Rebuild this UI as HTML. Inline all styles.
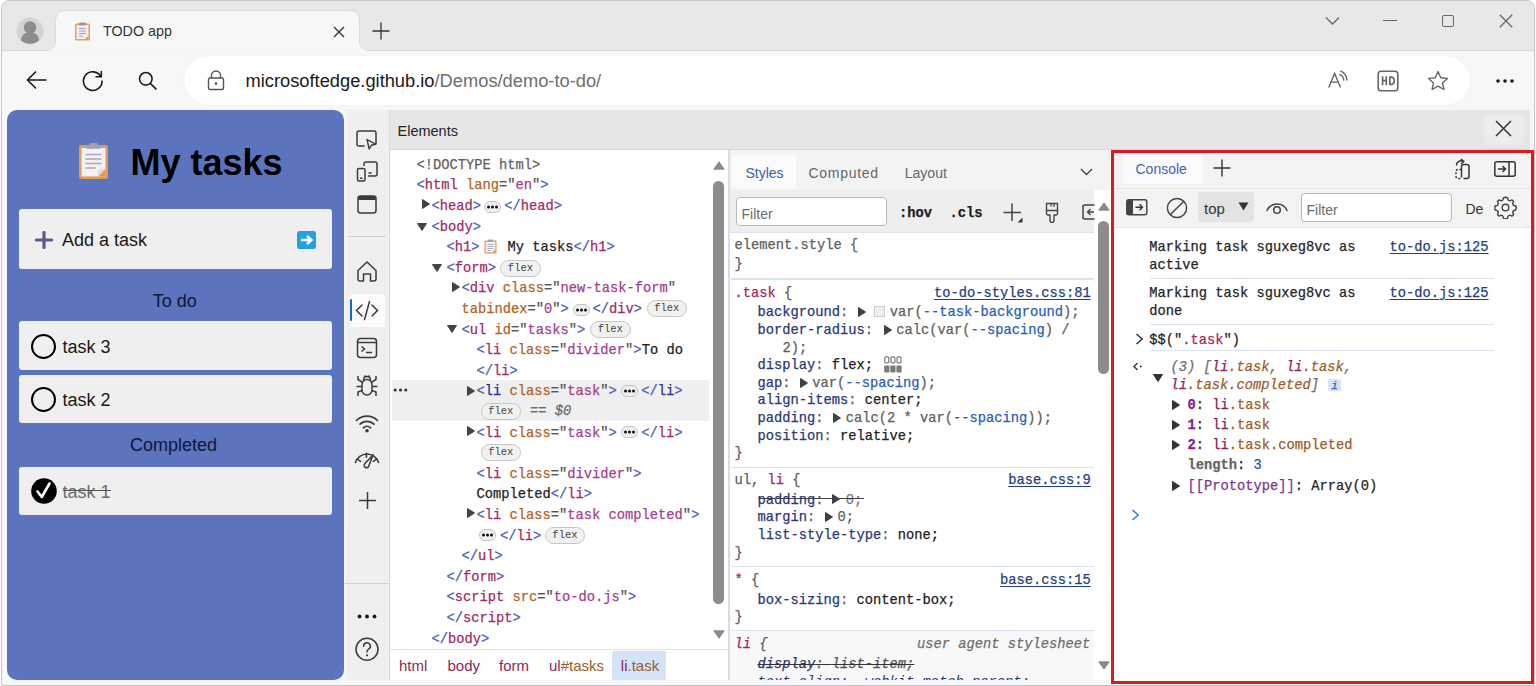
<!DOCTYPE html>
<html><head><meta charset="utf-8">
<style>
*{box-sizing:border-box;margin:0;padding:0}
html,body{width:1536px;height:686px;overflow:hidden;background:#fff;font-family:"Liberation Sans",sans-serif}
.a{position:absolute}
#win{position:absolute;left:1px;top:0;width:1534px;height:686px;background:#f7f7f7;border:1px solid #c4c4c4;border-radius:8px 8px 0 0;overflow:hidden}
#wi{position:absolute;left:-2px;top:-1px;width:1536px;height:686px}
.t{position:absolute;white-space:pre}.m{-webkit-text-stroke:0.25px currentColor}
.b{color:#4a5db6}.n{color:#a32b62}.at{color:#b1631f}.v{color:#a5408c}.q{color:#555}.x{color:#222}.dt{color:#5f5f5f}.nsel{color:#2b2f88}
.pill{border:1px solid #c6c6c6;background:#f1f1f1;border-radius:8.5px;font-family:"Liberation Mono",monospace;font-size:10.5px;line-height:15px;color:#444;text-align:center}
.dots{width:16px;height:10.5px;border:1px solid #b9b9b9;background:#ececec;border-radius:5px;line-height:0}
.dots svg{position:absolute;left:-1px;top:-1px}
</style></head><body>
<div id="win"><div id="wi">
<!-- browser chrome -->
<div class="a" style="left:0;top:0;width:1536px;height:51px;background:#e8e8e8"></div>
<div class="a" style="left:0;top:50px;width:1536px;height:1px;background:#d9d9d9"></div>
<!-- profile -->
<svg class="a" style="left:16px;top:17px" width="28" height="28" viewBox="0 0 28 28"><circle cx="14" cy="14" r="13.5" fill="#d4d4d4"/><circle cx="14" cy="10.5" r="6.2" fill="#8c8c8c"/><path d="M5 23.5 C5 17.5 9 15.8 14 15.8 C19 15.8 23 17.5 23 23.5 C20.5 25.5 17.5 26.8 14 26.8 C10.5 26.8 7.5 25.5 5 23.5Z" fill="#8c8c8c"/></svg>
<!-- active tab -->
<div class="a" style="left:56px;top:11px;width:303px;height:41px;background:#f7f7f7;border-radius:8px 8px 0 0;box-shadow:0 0 1.5px rgba(0,0,0,.25)"></div>
<div class="a" style="left:48px;top:43px;width:8px;height:8px;background:radial-gradient(circle at 0 0,#e8e8e8 7.5px,#f7f7f7 8px)"></div>
<div class="a" style="left:359px;top:43px;width:8px;height:8px;background:radial-gradient(circle at 100% 0,#e8e8e8 7.5px,#f7f7f7 8px)"></div>
<div class="a" style="left:40px;top:51px;width:340px;height:2px;background:#f7f7f7"></div>
<!-- tab favicon clipboard -->
<svg class="a" style="left:74px;top:22px" width="17" height="19" viewBox="0 0 17 19"><rect x="1" y="1.5" width="15" height="17" rx="1.5" fill="#e8a04a"/><rect x="2.5" y="3" width="12" height="14" fill="#f2eff6"/><rect x="5" y="0.5" width="7" height="3" rx="1" fill="#9a9a9a"/><path d="M5 6.5h7M5 9h7M5 11.5h7M5 14h4" stroke="#9aa0b0" stroke-width="1"/><path d="M11 17 L14.5 13.5 V17Z" fill="#e8a04a"/></svg>
<div class="a" style="left:103px;top:23.3px;font-size:14.3px;color:#333">TODO app</div>
<svg class="a" style="left:333px;top:26px" width="12" height="12" viewBox="0 0 12 12"><path d="M1 1L11 11M11 1L1 11" stroke="#333" stroke-width="1.4"/></svg>
<svg class="a" style="left:372px;top:22px" width="18" height="18" viewBox="0 0 18 18"><path d="M9 0.5V17.5M0.5 9H17.5" stroke="#333" stroke-width="1.3"/></svg>
<!-- window controls -->
<svg class="a" style="left:1325px;top:16px" width="15" height="10" viewBox="0 0 15 10"><path d="M1 1.5L7.5 8L14 1.5" fill="none" stroke="#666" stroke-width="1.3"/></svg>
<div class="a" style="left:1383px;top:20px;width:14px;height:1.3px;background:#666"></div>
<div class="a" style="left:1442px;top:15px;width:12px;height:12px;border:1.3px solid #666;border-radius:2px"></div>
<svg class="a" style="left:1499px;top:14px" width="14" height="14" viewBox="0 0 14 14"><path d="M0.8 0.8L13.2 13.2M13.2 0.8L0.8 13.2" stroke="#666" stroke-width="1.3"/></svg>
<!-- toolbar icons -->
<svg class="a" style="left:26px;top:70px" width="22" height="20" viewBox="0 0 22 20"><path d="M20.5 10H2M10 1.5L1.5 10L10 18.5" fill="none" stroke="#1a1a1a" stroke-width="1.6"/></svg>
<svg class="a" style="left:81px;top:69px" width="24" height="23" viewBox="0 0 24 23"><path d="M19.8 7.5A9.3 9.3 0 1 0 21 11.5" fill="none" stroke="#1a1a1a" stroke-width="1.6"/><path d="M14.5 7.8H20.3V2" fill="none" stroke="#1a1a1a" stroke-width="1.6"/></svg>
<svg class="a" style="left:138px;top:71px" width="20" height="20" viewBox="0 0 20 20"><circle cx="7.8" cy="7.8" r="6.3" fill="none" stroke="#1a1a1a" stroke-width="1.6"/><path d="M12.3 12.3L18.5 18.5" stroke="#1a1a1a" stroke-width="1.7"/></svg>
<!-- address bar -->
<div class="a" style="left:184px;top:56px;width:1286px;height:49px;background:#fff;border-radius:25px;box-shadow:0 0 1px rgba(0,0,0,.12)"></div>
<svg class="a" style="left:207px;top:70px" width="18" height="21" viewBox="0 0 18 21"><rect x="1.5" y="8" width="15" height="11.5" rx="1.8" fill="none" stroke="#555" stroke-width="1.4"/><path d="M4.5 8V5.5A4.5 4.5 0 0 1 13.5 5.5V8" fill="none" stroke="#555" stroke-width="1.4"/><circle cx="9" cy="13.5" r="1.2" fill="#444"/></svg>
<div class="a" style="left:245.5px;top:70px;font-size:18.3px;color:#1a1a1a;white-space:pre">microsoftedge.github.io<span style="color:#6e6e6e">/Demos/demo-to-do/</span></div>
<!-- right icons -->
<svg class="a" style="left:1326px;top:69px" width="24" height="21" viewBox="0 0 24 21"><path d="M2.7 18.5L8.6 4.4L14.6 18.5M5.1 13.1H12.3" fill="none" stroke="#666" stroke-width="1.4"/><path d="M13.3 5.1A7.5 7.5 0 0 1 17.8 11.6M14.3 1.9A10.5 10.5 0 0 1 21 11.6" fill="none" stroke="#666" stroke-width="1.4"/></svg>
<svg class="a" style="left:1377px;top:70px" width="22" height="22" viewBox="0 0 22 22"><rect x="1.2" y="1.2" width="19.6" height="19.6" rx="2.8" fill="none" stroke="#666" stroke-width="1.6"/><path d="M5.6 6.3V15.2M9.3 6.3V15.2M5.6 10.7H9.3M12.9 7.1V14.4H14.2A3.1 3.65 0 0 0 14.2 7.1Z" fill="none" stroke="#666" stroke-width="1.7"/></svg>
<svg class="a" style="left:1427px;top:70px" width="22" height="22" viewBox="0 0 22 22"><path d="M11 1.6L13.8 7.7L20.4 8.4L15.5 12.9L16.9 19.5L11 16.2L5.1 19.5L6.5 12.9L1.6 8.4L8.2 7.7Z" fill="none" stroke="#666" stroke-width="1.4" stroke-linejoin="round"/></svg>
<svg class="a" style="left:1495px;top:77px" width="20" height="8" viewBox="0 0 20 8"><circle cx="3" cy="4" r="1.8" fill="#1a1a1a"/><circle cx="10" cy="4" r="1.8" fill="#1a1a1a"/><circle cx="17" cy="4" r="1.8" fill="#1a1a1a"/></svg>
<!-- web page -->
<div class="a" style="left:7px;top:109.5px;width:336.7px;height:570px;background:#5c74be;border-radius:10px"></div>
<svg class="a" style="left:78px;top:142px" width="31" height="38" viewBox="0 0 31 38"><rect x="1" y="3" width="29" height="34" rx="2.5" fill="#e49a48"/><rect x="3.5" y="6" width="24" height="28.5" fill="#f3f0f7"/><path d="M8 3.5h15v1.8a1.5 1.5 0 0 1-1.5 1.5h-12a1.5 1.5 0 0 1-1.5-1.5z" fill="#a3a3a3"/><rect x="11.5" y="1" width="8" height="3.5" rx="1" fill="#a3a3a3"/><path d="M7.5 12.5h16M7.5 17h16M7.5 21.5h16M7.5 26h10" stroke="#a6a8b8" stroke-width="1.3"/><path d="M20 34.5L27.5 27V34.5Z" fill="#e49a48"/><path d="M20 34.5L20 27.5L27.5 27Z" fill="#dcd6e6"/></svg>
<div class="a" style="left:130.5px;top:142.2px;font-size:36px;font-weight:bold;color:#000">My tasks</div>
<div class="a" style="left:19px;top:209px;width:313px;height:60px;background:#efefef;border-radius:3px"></div>
<svg class="a" style="left:35px;top:231px" width="18" height="18" viewBox="0 0 18 18"><path d="M9 1.5V16.5M1.5 9H16.5" stroke="#5a5a8c" stroke-width="3.2" stroke-linecap="round"/></svg>
<div class="a" style="left:62px;top:229.7px;font-size:18px;color:#1a1a1a">Add a task</div>
<svg class="a" style="left:297px;top:231px" width="19" height="18" viewBox="0 0 19 18"><rect x="0" y="0" width="19" height="18" rx="2.5" fill="#22a0e2"/><path d="M4 9H13.5M10 5L14.5 9L10 13" fill="none" stroke="#fff" stroke-width="2.4" stroke-linejoin="miter"/></svg>
<div class="a" style="left:152.7px;top:291px;font-size:18px;color:#0b1836">To do</div>
<div class="a" style="left:19px;top:321px;width:313px;height:49px;background:#efefef;border-radius:3px"></div>
<div class="a" style="left:19px;top:374.5px;width:313px;height:48.5px;background:#efefef;border-radius:3px"></div>
<div class="a" style="left:31px;top:333.5px;width:25px;height:25px;border:2.9px solid #000;border-radius:50%"></div>
<div class="a" style="left:31px;top:386.5px;width:25px;height:25px;border:2.9px solid #000;border-radius:50%"></div>
<div class="a" style="left:62.5px;top:337px;font-size:18px;color:#1a1a1a">task 3</div>
<div class="a" style="left:62.5px;top:390px;font-size:18px;color:#1a1a1a">task 2</div>
<div class="a" style="left:130px;top:435.3px;font-size:18px;color:#0b1836">Completed</div>
<div class="a" style="left:19px;top:466.5px;width:313px;height:48px;background:#efefef;border-radius:3px"></div>
<svg class="a" style="left:30.5px;top:477.5px" width="26" height="26" viewBox="0 0 26 26"><circle cx="13" cy="13" r="12.8" fill="#000"/><path d="M6.5 13.5L10.8 19L18.5 5.5" fill="none" stroke="#fff" stroke-width="2.6" stroke-linecap="round" stroke-linejoin="round"/></svg>
<div class="a" style="left:62.5px;top:482px;font-size:18px;color:#6c6c6c">task 1</div>
<div class="a" style="left:62.5px;top:489.6px;width:48px;height:1.4px;background:#555"></div>
<div class="a" style="left:345.5px;top:110px;width:44.5px;height:570px;background:#efefef;"></div>
<div class="a" style="left:389px;top:110px;width:1.5px;height:570px;background:#d5d9e6;"></div>
<svg class="a" style="left:356px;top:130px" width="22" height="20" viewBox="0 0 22 20"><path d="M8 16H3a2 2 0 0 1-2-2V3a2 2 0 0 1 2-2h15a2 2 0 0 1 2 2v11" fill="none" stroke="#3b3b3b" stroke-width="1.5" stroke-linecap="round"/><path d="M11 9.5L19.5 14.2L15.3 15.3L13.2 19Z" fill="none" stroke="#3b3b3b" stroke-width="1.4" stroke-linejoin="round"/></svg>
<svg class="a" style="left:356px;top:161px" width="22" height="22" viewBox="0 0 22 22"><path d="M8 5V3a2 2 0 0 1 2-2h9a2 2 0 0 1 2 2v10a2 2 0 0 1-2 2h-7" fill="none" stroke="#3b3b3b" stroke-width="1.5"/><rect x="1.5" y="7.5" width="7.5" height="12.5" rx="1.5" fill="none" stroke="#3b3b3b" stroke-width="1.5"/><path d="M4 17.3h2.5M12.5 12h3" stroke="#3b3b3b" stroke-width="1.5"/></svg>
<svg class="a" style="left:357px;top:195px" width="20" height="19" viewBox="0 0 20 19"><rect x="1" y="1" width="18" height="17" rx="2.5" fill="none" stroke="#3b3b3b" stroke-width="1.5"/><path d="M1.5 2.5a1.5 1.5 0 0 1 1.5-1.5h14a1.5 1.5 0 0 1 1.5 1.5V5H1.5Z" fill="#3b3b3b"/></svg>
<div class="a" style="left:348px;top:236px;width:38px;height:1.2px;background:#d0d0d0;"></div>
<svg class="a" style="left:356px;top:260px" width="22" height="23" viewBox="0 0 22 23"><path d="M2 10.5L11 2L20 10.5V19a2 2 0 0 1-2 2h-3.5v-7h-7v7H4a2 2 0 0 1-2-2Z" fill="none" stroke="#3b3b3b" stroke-width="1.5" stroke-linejoin="round"/></svg>
<div class="a" style="left:350px;top:294px;width:35px;height:33px;background:#fbfbfb;border-radius:3px"></div>
<div class="a" style="left:350px;top:299px;width:2.3px;height:22px;background:#0f6cbd;border-radius:1px"></div>
<svg class="a" style="left:355px;top:300px" width="24" height="21" viewBox="0 0 24 21"><path d="M7 5L1.5 10.5L7 16M17 5L22.5 10.5L17 16M14.5 1.5L9.5 19.5" fill="none" stroke="#3b3b3b" stroke-width="1.5" stroke-linecap="round"/></svg>
<svg class="a" style="left:356px;top:337px" width="22" height="22" viewBox="0 0 22 22"><rect x="1.5" y="1.5" width="19" height="19" rx="3" fill="none" stroke="#3b3b3b" stroke-width="1.5"/><path d="M1.5 5.5H20.5" stroke="#3b3b3b" stroke-width="1.5"/><path d="M5.5 9.5L8.5 12L5.5 14.5M10 15.5H16" fill="none" stroke="#3b3b3b" stroke-width="1.5"/></svg>
<svg class="a" style="left:355px;top:374px" width="24" height="23" viewBox="0 0 24 23"><rect x="7" y="5.5" width="10" height="15.5" rx="5" fill="none" stroke="#3b3b3b" stroke-width="1.5"/><path d="M8.5 6C8.5 3.5 10 2.5 12 2.5S15.5 3.5 15.5 6M3 2v3.5L7 8M21 2v3.5L17 8M1.5 12.5H7M17 12.5H22.5M3 22v-4L7 16.5M21 22v-4L17 16.5M9.5 1.5l1 1.5M14.5 1.5l-1 1.5" fill="none" stroke="#3b3b3b" stroke-width="1.5"/></svg>
<svg class="a" style="left:355px;top:414px" width="24" height="19" viewBox="0 0 24 19"><path d="M1.5 6.5A15 15 0 0 1 22.5 6.5M5 10.2A10 10 0 0 1 19 10.2M8.5 13.8A5 5 0 0 1 15.5 13.8" fill="none" stroke="#3b3b3b" stroke-width="1.7" stroke-linecap="round"/><circle cx="12" cy="16.8" r="1.8" fill="#3b3b3b"/></svg>
<svg class="a" style="left:350px;top:445px" width="35" height="30" viewBox="0 0 35 30"><path d="M5.5 17.5A12 12 0 0 1 28.5 17.5" fill="none" stroke="#3b3b3b" stroke-width="1.6" stroke-linecap="round"/><path d="M7.2 14.2L10.6 16.4M16.4 8.3V12.3M26.8 14.2L23.4 16.4" stroke="#3b3b3b" stroke-width="1.6" stroke-linecap="round"/><path d="M23.2 9.8L18.9 20.6A2.4 2.4 0 1 1 14.9 18.6Z" fill="none" stroke="#3b3b3b" stroke-width="1.5" stroke-linejoin="round"/></svg>
<svg class="a" style="left:358px;top:491px" width="19" height="19" viewBox="0 0 19 19"><path d="M9.5 1V18M1 9.5H18" stroke="#3b3b3b" stroke-width="1.5"/></svg>
<div class="a" style="left:345px;top:583px;width:43px;height:1.2px;background:#d0d0d0;"></div>
<svg class="a" style="left:357px;top:612px" width="20" height="8" viewBox="0 0 20 8"><circle cx="2.5" cy="4.5" r="1.9" fill="#1a1a1a"/><circle cx="10" cy="4.5" r="1.9" fill="#1a1a1a"/><circle cx="17.5" cy="4.5" r="1.9" fill="#1a1a1a"/></svg>
<svg class="a" style="left:355px;top:637px" width="24" height="25" viewBox="0 0 24 25"><circle cx="12" cy="12.2" r="11" fill="none" stroke="#3b3b3b" stroke-width="1.5"/><path d="M8.6 9.2a3.4 3.4 0 1 1 5 3c-1.2.7-1.6 1.4-1.6 2.8" fill="none" stroke="#3b3b3b" stroke-width="1.5" stroke-linecap="round"/><circle cx="12" cy="18.3" r="1.1" fill="#3b3b3b"/></svg>
<div class="a" style="left:390px;top:110px;width:1140px;height:40px;background:#e6e6e6;"></div>
<div class="a" style="left:390px;top:149px;width:1140px;height:1px;background:#d6d6d6;"></div>
<div class="t" style="left:397.5px;top:121.55px;font-size:14.5px;line-height:18.85px;font-family:'Liberation Sans',sans-serif;color:#242424;">Elements</div>
<div class="a" style="left:1484px;top:114.5px;width:40px;height:30.5px;background:#ececec;border-radius:2px"></div>
<svg class="a" style="left:1495px;top:120px" width="17" height="17" viewBox="0 0 17 17"><path d="M1 1L16 16M16 1L1 16" stroke="#333" stroke-width="1.5"/></svg>
<div class="a" style="left:390px;top:150px;width:339px;height:530px;background:#fff;"></div>
<div class="a" style="left:392px;top:380.3px;width:317px;height:40.5px;background:#efefef;"></div>
<svg class="a" style="left:393px;top:386px" width="16" height="8" viewBox="0 0 16 8"><circle cx="2.2" cy="4" r="1.6" fill="#333"/><circle cx="7.5" cy="4" r="1.6" fill="#333"/><circle cx="12.8" cy="4" r="1.6" fill="#333"/></svg>
<div class="t m" style="left:416.5px;top:156.80px;font-size:13.75px;line-height:17.88px;font-family:'Liberation Mono',monospace;color:#222;"><span class="dt">&lt;!DOCTYPE html&gt;</span></div>
<div class="t m" style="left:416.5px;top:177.40px;font-size:13.75px;line-height:17.88px;font-family:'Liberation Mono',monospace;color:#222;"><span class="b">&lt;</span><span class="n">html</span> <span class="at">lang</span><span class="q">=&quot;</span><span class="v">en</span><span class="q">&quot;</span><span class="b">&gt;</span></div>
<svg class="a" style="left:422px;top:199.2px" width="8" height="10" viewBox="0 0 8 10"><path d="M0.5 0.5L7.5 5L0.5 9.5Z" fill="#444" stroke="#444" stroke-width="1" stroke-linejoin="round"/></svg>
<div class="t m" style="left:431.5px;top:198.00px;font-size:13.75px;line-height:17.88px;font-family:'Liberation Mono',monospace;color:#222;"><span class="b">&lt;</span><span class="n">head</span><span class="b">&gt;</span></div>
<svg class="a" style="left:484.3px;top:200.8px" width="17" height="12" viewBox="0 0 17 12"><rect x="0.5" y="0.5" width="16" height="11" rx="5.5" fill="#efefef" stroke="#c4c4c4"/><circle cx="4.5" cy="6" r="1.5" fill="#111"/><circle cx="8.5" cy="6" r="1.5" fill="#111"/><circle cx="12.5" cy="6" r="1.5" fill="#111"/></svg>
<div class="t m" style="left:504.2px;top:198.00px;font-size:13.75px;line-height:17.88px;font-family:'Liberation Mono',monospace;color:#222;"><span class="b">&lt;/</span><span class="n">head</span><span class="b">&gt;</span></div>
<svg class="a" style="left:417px;top:223px" width="10" height="8" viewBox="0 0 10 8"><path d="M0.5 0.5L9.5 0.5L5 7.5Z" fill="#444" stroke="#444" stroke-width="1" stroke-linejoin="round"/></svg>
<div class="t m" style="left:431.5px;top:218.60px;font-size:13.75px;line-height:17.88px;font-family:'Liberation Mono',monospace;color:#222;"><span class="b">&lt;</span><span class="n">body</span><span class="b">&gt;</span></div>
<div class="t m" style="left:446.5px;top:239.20px;font-size:13.75px;line-height:17.88px;font-family:'Liberation Mono',monospace;color:#222;"><span class="b">&lt;</span><span class="n">h1</span><span class="b">&gt;</span></div>
<svg class="a" style="left:483.5px;top:239px" width="13" height="15" viewBox="0 0 13 15"><rect x="0.5" y="1.5" width="12" height="13" rx="1" fill="#e49a48"/><rect x="1.7" y="2.7" width="9.6" height="10.6" fill="#f3f0f7"/><rect x="4" y="0.5" width="5" height="2.3" rx="0.6" fill="#a3a3a3"/><path d="M3.3 5.5h6.4M3.3 7.5h6.4M3.3 9.5h6.4M3.3 11.5h4" stroke="#a6a8b8" stroke-width="0.8"/><path d="M8.5 13.3L11.3 10.5V13.3Z" fill="#e49a48"/></svg>
<div class="t m" style="left:507.5px;top:239.20px;font-size:13.75px;line-height:17.88px;font-family:'Liberation Mono',monospace;color:#222;"><span class="x">My tasks</span><span class="b">&lt;/</span><span class="n">h1</span><span class="b">&gt;</span></div>
<svg class="a" style="left:431.5px;top:264px" width="10" height="8" viewBox="0 0 10 8"><path d="M0.5 0.5L9.5 0.5L5 7.5Z" fill="#444" stroke="#444" stroke-width="1" stroke-linejoin="round"/></svg>
<div class="t m" style="left:446.5px;top:259.80px;font-size:13.75px;line-height:17.88px;font-family:'Liberation Mono',monospace;color:#222;"><span class="b">&lt;</span><span class="n">form</span><span class="b">&gt;</span></div>
<div class="a pill" style="left:500.2px;top:259.6px;width:40.5px;height:17px">flex</div>
<svg class="a" style="left:452px;top:282px" width="8" height="10" viewBox="0 0 8 10"><path d="M0.5 0.5L7.5 5L0.5 9.5Z" fill="#444" stroke="#444" stroke-width="1" stroke-linejoin="round"/></svg>
<div class="t m" style="left:461.5px;top:280.40px;font-size:13.75px;line-height:17.88px;font-family:'Liberation Mono',monospace;color:#222;"><span class="b">&lt;</span><span class="n">div</span> <span class="at">class</span><span class="q">=&quot;</span><span class="v">new-task-form</span><span class="q">&quot;</span></div>
<div class="t m" style="left:461.5px;top:301.00px;font-size:13.75px;line-height:17.88px;font-family:'Liberation Mono',monospace;color:#222;"><span class="at">tabindex</span><span class="q">=&quot;</span><span class="v">0</span><span class="q">&quot;</span><span class="b">&gt;</span></div>
<svg class="a" style="left:572.7px;top:303.5px" width="17" height="12" viewBox="0 0 17 12"><rect x="0.5" y="0.5" width="16" height="11" rx="5.5" fill="#efefef" stroke="#c4c4c4"/><circle cx="4.5" cy="6" r="1.5" fill="#111"/><circle cx="8.5" cy="6" r="1.5" fill="#111"/><circle cx="12.5" cy="6" r="1.5" fill="#111"/></svg>
<div class="t m" style="left:592.5px;top:301.00px;font-size:13.75px;line-height:17.88px;font-family:'Liberation Mono',monospace;color:#222;"><span class="b">&lt;/</span><span class="n">div</span><span class="b">&gt;</span></div>
<div class="a pill" style="left:646.5px;top:300px;width:40.5px;height:17px">flex</div>
<svg class="a" style="left:446.5px;top:325px" width="10" height="8" viewBox="0 0 10 8"><path d="M0.5 0.5L9.5 0.5L5 7.5Z" fill="#444" stroke="#444" stroke-width="1" stroke-linejoin="round"/></svg>
<div class="t m" style="left:461.5px;top:321.60px;font-size:13.75px;line-height:17.88px;font-family:'Liberation Mono',monospace;color:#222;"><span class="b">&lt;</span><span class="n">ul</span> <span class="at">id</span><span class="q">=&quot;</span><span class="v">tasks</span><span class="q">&quot;</span><span class="b">&gt;</span></div>
<div class="a pill" style="left:590px;top:320.5px;width:40.5px;height:17px">flex</div>
<div class="t m" style="left:476.5px;top:342.20px;font-size:13.75px;line-height:17.88px;font-family:'Liberation Mono',monospace;color:#222;"><span class="b">&lt;</span><span class="n">li</span> <span class="at">class</span><span class="q">=&quot;</span><span class="v">divider</span><span class="q">&quot;</span><span class="b">&gt;</span><span class="x">To do</span></div>
<div class="t m" style="left:476.5px;top:362.80px;font-size:13.75px;line-height:17.88px;font-family:'Liberation Mono',monospace;color:#222;"><span class="b">&lt;/</span><span class="n">li</span><span class="b">&gt;</span></div>
<svg class="a" style="left:467px;top:385.5px" width="8" height="10" viewBox="0 0 8 10"><path d="M0.5 0.5L7.5 5L0.5 9.5Z" fill="#444" stroke="#444" stroke-width="1" stroke-linejoin="round"/></svg>
<div class="t m" style="left:476.5px;top:383.40px;font-size:13.75px;line-height:17.88px;font-family:'Liberation Mono',monospace;color:#222;"><span class="b">&lt;</span><span class="nsel">li</span> <span class="at">class</span><span class="q">=&quot;</span><span class="v">task</span><span class="q">&quot;</span><span class="b">&gt;</span></div>
<svg class="a" style="left:620.5px;top:385px" width="17" height="12" viewBox="0 0 17 12"><rect x="0.5" y="0.5" width="16" height="11" rx="5.5" fill="#efefef" stroke="#c4c4c4"/><circle cx="4.5" cy="6" r="1.5" fill="#111"/><circle cx="8.5" cy="6" r="1.5" fill="#111"/><circle cx="12.5" cy="6" r="1.5" fill="#111"/></svg>
<div class="t m" style="left:641.2px;top:383.40px;font-size:13.75px;line-height:17.88px;font-family:'Liberation Mono',monospace;color:#222;"><span class="b">&lt;/</span><span class="nsel">li</span><span class="b">&gt;</span></div>
<div class="a pill" style="left:480.5px;top:402.5px;width:40.5px;height:17px">flex</div>
<div class="t m" style="left:530px;top:402.60px;font-size:13.75px;line-height:17.88px;font-family:'Liberation Mono',monospace;color:#6b6b6b;font-style:italic">== $0</div>
<svg class="a" style="left:467px;top:426px" width="8" height="10" viewBox="0 0 8 10"><path d="M0.5 0.5L7.5 5L0.5 9.5Z" fill="#444" stroke="#444" stroke-width="1" stroke-linejoin="round"/></svg>
<div class="t m" style="left:476.5px;top:424.60px;font-size:13.75px;line-height:17.88px;font-family:'Liberation Mono',monospace;color:#222;"><span class="b">&lt;</span><span class="n">li</span> <span class="at">class</span><span class="q">=&quot;</span><span class="v">task</span><span class="q">&quot;</span><span class="b">&gt;</span></div>
<svg class="a" style="left:620.5px;top:426px" width="17" height="12" viewBox="0 0 17 12"><rect x="0.5" y="0.5" width="16" height="11" rx="5.5" fill="#efefef" stroke="#c4c4c4"/><circle cx="4.5" cy="6" r="1.5" fill="#111"/><circle cx="8.5" cy="6" r="1.5" fill="#111"/><circle cx="12.5" cy="6" r="1.5" fill="#111"/></svg>
<div class="t m" style="left:641.2px;top:424.60px;font-size:13.75px;line-height:17.88px;font-family:'Liberation Mono',monospace;color:#222;"><span class="b">&lt;/</span><span class="n">li</span><span class="b">&gt;</span></div>
<div class="a pill" style="left:480.5px;top:443.5px;width:40.5px;height:17px">flex</div>
<div class="t m" style="left:476.5px;top:465.80px;font-size:13.75px;line-height:17.88px;font-family:'Liberation Mono',monospace;color:#222;"><span class="b">&lt;</span><span class="n">li</span> <span class="at">class</span><span class="q">=&quot;</span><span class="v">divider</span><span class="q">&quot;</span><span class="b">&gt;</span></div>
<div class="t m" style="left:476.5px;top:486.40px;font-size:13.75px;line-height:17.88px;font-family:'Liberation Mono',monospace;color:#222;"><span class="x">Completed</span><span class="b">&lt;/</span><span class="n">li</span><span class="b">&gt;</span></div>
<svg class="a" style="left:467px;top:508px" width="8" height="10" viewBox="0 0 8 10"><path d="M0.5 0.5L7.5 5L0.5 9.5Z" fill="#444" stroke="#444" stroke-width="1" stroke-linejoin="round"/></svg>
<div class="t m" style="left:476.5px;top:507.00px;font-size:13.75px;line-height:17.88px;font-family:'Liberation Mono',monospace;color:#222;"><span class="b">&lt;</span><span class="n">li</span> <span class="at">class</span><span class="q">=&quot;</span><span class="v">task completed</span><span class="q">&quot;</span><span class="b">&gt;</span></div>
<svg class="a" style="left:478.8px;top:529px" width="17" height="12" viewBox="0 0 17 12"><rect x="0.5" y="0.5" width="16" height="11" rx="5.5" fill="#efefef" stroke="#c4c4c4"/><circle cx="4.5" cy="6" r="1.5" fill="#111"/><circle cx="8.5" cy="6" r="1.5" fill="#111"/><circle cx="12.5" cy="6" r="1.5" fill="#111"/></svg>
<div class="t m" style="left:500px;top:527.60px;font-size:13.75px;line-height:17.88px;font-family:'Liberation Mono',monospace;color:#222;"><span class="b">&lt;/</span><span class="n">li</span><span class="b">&gt;</span></div>
<div class="a pill" style="left:544.7px;top:526.5px;width:40.5px;height:17px">flex</div>
<div class="t m" style="left:461.5px;top:548.20px;font-size:13.75px;line-height:17.88px;font-family:'Liberation Mono',monospace;color:#222;"><span class="b">&lt;/</span><span class="n">ul</span><span class="b">&gt;</span></div>
<div class="t m" style="left:446.5px;top:568.80px;font-size:13.75px;line-height:17.88px;font-family:'Liberation Mono',monospace;color:#222;"><span class="b">&lt;/</span><span class="n">form</span><span class="b">&gt;</span></div>
<div class="t m" style="left:446.5px;top:589.40px;font-size:13.75px;line-height:17.88px;font-family:'Liberation Mono',monospace;color:#222;"><span class="b">&lt;</span><span class="n">script</span> <span class="at">src</span><span class="q">=&quot;</span><span class="v">to-do.js</span><span class="q">&quot;</span><span class="b">&gt;</span></div>
<div class="t m" style="left:446.5px;top:610.00px;font-size:13.75px;line-height:17.88px;font-family:'Liberation Mono',monospace;color:#222;"><span class="b">&lt;/</span><span class="n">script</span><span class="b">&gt;</span></div>
<div class="t m" style="left:431.5px;top:630.60px;font-size:13.75px;line-height:17.88px;font-family:'Liberation Mono',monospace;color:#222;"><span class="b">&lt;/</span><span class="n">body</span><span class="b">&gt;</span></div>
<svg class="a" style="left:712.5px;top:160.5px" width="12" height="9" viewBox="0 0 12 9"><path d="M6 0.8L11.2 8.2H0.8Z" fill="#8a8a8a" stroke="#8a8a8a" stroke-linejoin="round"/></svg>
<div class="a" style="left:713.3px;top:180.5px;width:11px;height:423px;background:#8c8c8c;border-radius:5.5px"></div>
<svg class="a" style="left:712.5px;top:630px" width="12" height="9" viewBox="0 0 12 9"><path d="M6 8.2L11.2 0.8H0.8Z" fill="#8a8a8a" stroke="#8a8a8a" stroke-linejoin="round"/></svg>
<div class="a" style="left:390px;top:649.2px;width:339px;height:1.3px;background:#dde4ef;"></div>
<div class="a" style="left:612px;top:650.5px;width:54.2px;height:29.2px;background:#d3e3fa;"></div>
<div class="t" style="left:399px;top:656.35px;font-size:15px;line-height:19.5px;font-family:'Liberation Sans',sans-serif;color:#8a2a58;">html</div>
<div class="t" style="left:447.5px;top:656.35px;font-size:15px;line-height:19.5px;font-family:'Liberation Sans',sans-serif;color:#8a2a58;">body</div>
<div class="t" style="left:499px;top:656.35px;font-size:15px;line-height:19.5px;font-family:'Liberation Sans',sans-serif;color:#8a2a58;">form</div>
<div class="t" style="left:549px;top:656.35px;font-size:15px;line-height:19.5px;font-family:'Liberation Sans',sans-serif;color:#222;"><span style="color:#8a2a58">ul</span><span style="color:#9b5c2b">#tasks</span></div>
<div class="t" style="left:620.8px;top:656.35px;font-size:15px;line-height:19.5px;font-family:'Liberation Sans',sans-serif;color:#222;"><span style="color:#8a2a58">li</span><span style="color:#9b5c2b">.task</span></div>
<div class="a" style="left:729px;top:150px;width:382px;height:530px;background:#fff;"></div>
<div class="a" style="left:728.2px;top:150px;width:1.6px;height:530px;background:#d5dcea;"></div>
<div class="a" style="left:729.8px;top:150px;width:381px;height:39.6px;background:#f3f3f3;"></div>
<div class="a" style="left:732.4px;top:154.7px;width:63.6px;height:33.5px;background:#fbfbfb;"></div>
<div class="t" style="left:745.5px;top:163.95px;font-size:14px;line-height:18.2px;font-family:'Liberation Sans',sans-serif;color:#3a63b3;">Styles</div>
<div class="t" style="left:808.5px;top:163.95px;font-size:14px;line-height:18.2px;font-family:'Liberation Sans',sans-serif;color:#666;letter-spacing:0.7px">Computed</div>
<div class="t" style="left:904.8px;top:163.95px;font-size:14px;line-height:18.2px;font-family:'Liberation Sans',sans-serif;color:#666;">Layout</div>
<svg class="a" style="left:1080px;top:168px" width="13" height="8" viewBox="0 0 13 8"><path d="M1 1L6.5 6.5L12 1" fill="none" stroke="#444" stroke-width="1.4"/></svg>
<div class="a" style="left:729.8px;top:189.6px;width:364.5px;height:42.9px;background:#eeeeee;"></div>
<div class="a" style="left:729.8px;top:232px;width:364.5px;height:1.2px;background:#dce4f0;"></div>
<div class="a" style="left:736.4px;top:197.4px;width:150.2px;height:29.1px;background:#fff;border:1px solid #b8b8b8;border-radius:4px"></div>
<div class="t" style="left:741.5px;top:205.15px;font-size:14px;line-height:18.2px;font-family:'Liberation Sans',sans-serif;color:#6b6b6b;">Filter</div>
<div class="t m" style="left:899px;top:204.70px;font-size:13.75px;line-height:17.88px;font-family:'Liberation Mono',monospace;color:#1e1e1e;font-weight:bold">:hov</div>
<div class="t m" style="left:949.5px;top:204.70px;font-size:13.75px;line-height:17.88px;font-family:'Liberation Mono',monospace;color:#1e1e1e;font-weight:bold">.cls</div>
<svg class="a" style="left:1003px;top:203px" width="20" height="20" viewBox="0 0 20 20"><path d="M9 0.5V18M0.5 9.5H18" stroke="#444" stroke-width="1.5"/><path d="M19.5 14.5V19.5H14.5Z" fill="#333"/></svg>
<svg class="a" style="left:1045px;top:201.5px" width="14" height="21" viewBox="0 0 14 21"><path d="M1.5 1.5H12.5V11.5a1.5 1.5 0 0 1-1.5 1.5H9V18.5a2 2 0 0 1-4 0V13H3a1.5 1.5 0 0 1-1.5-1.5Z" fill="none" stroke="#444" stroke-width="1.4" stroke-linejoin="round"/><path d="M1.5 8.5H12.5M6 1.5V4.5M9 1.5V5" stroke="#444" stroke-width="1.3"/></svg>
<svg class="a" style="left:1082px;top:203.5px" width="12.5" height="16" viewBox="0 0 12.5 16"><path d="M12.5 1H3a2 2 0 0 0-2 2V13a2 2 0 0 0 2 2H12.5M1 1V15" fill="none" stroke="#444" stroke-width="1.5"/><path d="M12 8H5.5M8.5 5L5.5 8L8.5 11" fill="none" stroke="#444" stroke-width="1.4"/></svg>
<svg class="a" style="left:1097.5px;top:201.5px" width="12" height="9" viewBox="0 0 12 9"><path d="M6 0.8L11.2 8.2H0.8Z" fill="#8a8a8a" stroke="#8a8a8a" stroke-linejoin="round"/></svg>
<div class="a" style="left:1098px;top:221px;width:11px;height:153px;background:#8c8c8c;border-radius:5.5px"></div>
<svg class="a" style="left:1097.5px;top:660.5px" width="12" height="9" viewBox="0 0 12 9"><path d="M6 8.2L11.2 0.8H0.8Z" fill="#8a8a8a" stroke="#8a8a8a" stroke-linejoin="round"/></svg>
<div class="t m" style="left:734.5px;top:237.10px;font-size:13.75px;line-height:17.88px;font-family:'Liberation Mono',monospace;color:#222;"><span style="color:#5e5e5e">element.style {</span></div>
<div class="t m" style="left:734.5px;top:255.60px;font-size:13.75px;line-height:17.88px;font-family:'Liberation Mono',monospace;color:#222;"><span style="color:#5e5e5e">}</span></div>
<div class="a" style="left:731px;top:278.4px;width:363px;height:1.2px;background:#dce4f2;"></div>
<div class="t m" style="left:734.5px;top:284.60px;font-size:13.75px;line-height:17.88px;font-family:'Liberation Mono',monospace;color:#222;"><span style="color:#a3285c">.task</span><span style="color:#5e5e5e"> {</span></div>
<div class="t m" style="left:934px;top:284.60px;font-size:13.75px;line-height:17.88px;font-family:'Liberation Mono',monospace;color:#1f3f7f;text-decoration:underline;text-underline-offset:1.5px">to-do-styles.css:81</div>
<div class="t m" style="left:757.5px;top:304.40px;font-size:13.75px;line-height:17.88px;font-family:'Liberation Mono',monospace;color:#222;"><span style="color:#2a3878">background</span><span style="color:#5e5e5e">:</span></div>
<svg class="a" style="left:858.3px;top:307.1px" width="8" height="10" viewBox="0 0 8 10"><path d="M0.5 0.5L7.5 5L0.5 9.5Z" fill="#404040" stroke="#404040" stroke-width="1" stroke-linejoin="round"/></svg>
<div class="a" style="left:873.6px;top:306px;width:11.8px;height:11px;background:#eeeeee;border:1px solid #cfcfcf"></div>
<div class="t m" style="left:889.8px;top:304.40px;font-size:13.75px;line-height:17.88px;font-family:'Liberation Mono',monospace;color:#222;"><span style="color:#5e5e5e">var(</span><span style="color:#2b5eb2">--task-background</span><span style="color:#5e5e5e">);</span></div>
<div class="t m" style="left:757.5px;top:322.00px;font-size:13.75px;line-height:17.88px;font-family:'Liberation Mono',monospace;color:#222;"><span style="color:#2a3878">border-radius</span><span style="color:#5e5e5e">:</span></div>
<svg class="a" style="left:883.5px;top:324.7px" width="8" height="10" viewBox="0 0 8 10"><path d="M0.5 0.5L7.5 5L0.5 9.5Z" fill="#404040" stroke="#404040" stroke-width="1" stroke-linejoin="round"/></svg>
<div class="t m" style="left:896.3px;top:322.00px;font-size:13.75px;line-height:17.88px;font-family:'Liberation Mono',monospace;color:#222;"><span style="color:#5e5e5e">calc(var(</span><span style="color:#2b5eb2">--spacing</span><span style="color:#5e5e5e">) /</span></div>
<div class="t m" style="left:782.5px;top:339.60px;font-size:13.75px;line-height:17.88px;font-family:'Liberation Mono',monospace;color:#222;"><span style="color:#5e5e5e">2);</span></div>
<div class="t m" style="left:757.5px;top:357.20px;font-size:13.75px;line-height:17.88px;font-family:'Liberation Mono',monospace;color:#222;"><span style="color:#2a3878">display</span><span style="color:#5e5e5e">:</span></div>
<div class="t m" style="left:831.75px;top:357.20px;font-size:13.75px;line-height:17.88px;font-family:'Liberation Mono',monospace;color:#222;"><span style="color:#222">flex;</span></div>
<svg class="a" style="left:883.5px;top:355.5px" width="18" height="17" viewBox="0 0 18 17"><g fill="none" stroke="#7a7a7a" stroke-width="1.2"><rect x="0.8" y="0.8" width="4" height="6" rx="1"/><rect x="6.9" y="0.8" width="4" height="6" rx="1"/><rect x="13" y="0.8" width="4" height="6" rx="1"/></g><g fill="#7a7a7a"><rect x="0.2" y="9.5" width="5.2" height="7" rx="1"/><rect x="6.3" y="9.5" width="5.2" height="7" rx="1"/><rect x="12.4" y="9.5" width="5.2" height="7" rx="1"/></g></svg>
<div class="t m" style="left:757.5px;top:374.80px;font-size:13.75px;line-height:17.88px;font-family:'Liberation Mono',monospace;color:#222;"><span style="color:#2a3878">gap</span><span style="color:#5e5e5e">:</span></div>
<svg class="a" style="left:799.5px;top:377.5px" width="8" height="10" viewBox="0 0 8 10"><path d="M0.5 0.5L7.5 5L0.5 9.5Z" fill="#404040" stroke="#404040" stroke-width="1" stroke-linejoin="round"/></svg>
<div class="t m" style="left:812.2px;top:374.80px;font-size:13.75px;line-height:17.88px;font-family:'Liberation Mono',monospace;color:#222;"><span style="color:#5e5e5e">var(</span><span style="color:#2b5eb2">--spacing</span><span style="color:#5e5e5e">);</span></div>
<div class="t m" style="left:757.5px;top:392.40px;font-size:13.75px;line-height:17.88px;font-family:'Liberation Mono',monospace;color:#222;"><span style="color:#2a3878">align-items</span><span style="color:#5e5e5e">:</span></div>
<div class="t m" style="left:864.75px;top:392.40px;font-size:13.75px;line-height:17.88px;font-family:'Liberation Mono',monospace;color:#222;"><span style="color:#222">center;</span></div>
<div class="t m" style="left:757.5px;top:410.00px;font-size:13.75px;line-height:17.88px;font-family:'Liberation Mono',monospace;color:#222;"><span style="color:#2a3878">padding</span><span style="color:#5e5e5e">:</span></div>
<svg class="a" style="left:833px;top:412.7px" width="8" height="10" viewBox="0 0 8 10"><path d="M0.5 0.5L7.5 5L0.5 9.5Z" fill="#404040" stroke="#404040" stroke-width="1" stroke-linejoin="round"/></svg>
<div class="t m" style="left:845.8px;top:410.00px;font-size:13.75px;line-height:17.88px;font-family:'Liberation Mono',monospace;color:#222;"><span style="color:#5e5e5e">calc(2 * var(</span><span style="color:#2b5eb2">--spacing</span><span style="color:#5e5e5e">));</span></div>
<div class="t m" style="left:757.5px;top:427.60px;font-size:13.75px;line-height:17.88px;font-family:'Liberation Mono',monospace;color:#222;"><span style="color:#2a3878">position</span><span style="color:#5e5e5e">:</span></div>
<div class="t m" style="left:840.0px;top:427.60px;font-size:13.75px;line-height:17.88px;font-family:'Liberation Mono',monospace;color:#222;"><span style="color:#222">relative;</span></div>
<div class="t m" style="left:734.5px;top:445.20px;font-size:13.75px;line-height:17.88px;font-family:'Liberation Mono',monospace;color:#222;"><span style="color:#5e5e5e">}</span></div>
<div class="a" style="left:731px;top:466.8px;width:363px;height:1.2px;background:#dce4f2;"></div>
<div class="t m" style="left:734.5px;top:471.90px;font-size:13.75px;line-height:17.88px;font-family:'Liberation Mono',monospace;color:#222;"><span style="color:#5e5e5e">ul, </span><span style="color:#a3285c">li</span><span style="color:#5e5e5e"> {</span></div>
<div class="t m" style="left:1008.2px;top:471.90px;font-size:13.75px;line-height:17.88px;font-family:'Liberation Mono',monospace;color:#1f3f7f;text-decoration:underline;text-underline-offset:1.5px">base.css:9</div>
<div class="t m" style="left:757.5px;top:491.50px;font-size:13.75px;line-height:17.88px;font-family:'Liberation Mono',monospace;color:#222;"><span style="color:#2a3878">padding</span><span style="color:#5e5e5e">:</span></div>
<svg class="a" style="left:832.3px;top:494.2px" width="8" height="10" viewBox="0 0 8 10"><path d="M0.5 0.5L7.5 5L0.5 9.5Z" fill="#404040" stroke="#404040" stroke-width="1" stroke-linejoin="round"/></svg>
<div class="t m" style="left:845.8px;top:491.50px;font-size:13.75px;line-height:17.88px;font-family:'Liberation Mono',monospace;color:#222;"><span style="color:#777">0;</span></div>
<div class="a" style="left:757.5px;top:498.3px;width:106px;height:1.1px;background:#444;"></div>
<div class="t m" style="left:757.5px;top:509.20px;font-size:13.75px;line-height:17.88px;font-family:'Liberation Mono',monospace;color:#222;"><span style="color:#2a3878">margin</span><span style="color:#5e5e5e">:</span></div>
<svg class="a" style="left:824.5px;top:511.90000000000003px" width="8" height="10" viewBox="0 0 8 10"><path d="M0.5 0.5L7.5 5L0.5 9.5Z" fill="#404040" stroke="#404040" stroke-width="1" stroke-linejoin="round"/></svg>
<div class="t m" style="left:837.6px;top:509.20px;font-size:13.75px;line-height:17.88px;font-family:'Liberation Mono',monospace;color:#222;"><span style="color:#5e5e5e">0;</span></div>
<div class="t m" style="left:757.5px;top:526.90px;font-size:13.75px;line-height:17.88px;font-family:'Liberation Mono',monospace;color:#222;"><span style="color:#2a3878">list-style-type</span><span style="color:#5e5e5e">:</span></div>
<div class="t m" style="left:897.75px;top:526.90px;font-size:13.75px;line-height:17.88px;font-family:'Liberation Mono',monospace;color:#222;"><span style="color:#222">none;</span></div>
<div class="t m" style="left:734.5px;top:544.60px;font-size:13.75px;line-height:17.88px;font-family:'Liberation Mono',monospace;color:#222;"><span style="color:#5e5e5e">}</span></div>
<div class="a" style="left:731px;top:566.2px;width:363px;height:1.2px;background:#dce4f2;"></div>
<div class="t m" style="left:734.5px;top:572.30px;font-size:13.75px;line-height:17.88px;font-family:'Liberation Mono',monospace;color:#222;"><span style="color:#a3285c">*</span><span style="color:#5e5e5e"> {</span></div>
<div class="t m" style="left:1000px;top:572.30px;font-size:13.75px;line-height:17.88px;font-family:'Liberation Mono',monospace;color:#1f3f7f;text-decoration:underline;text-underline-offset:1.5px">base.css:15</div>
<div class="t m" style="left:757.5px;top:591.60px;font-size:13.75px;line-height:17.88px;font-family:'Liberation Mono',monospace;color:#222;"><span style="color:#2a3878">box-sizing</span><span style="color:#5e5e5e">:</span></div>
<div class="t m" style="left:856.5px;top:591.60px;font-size:13.75px;line-height:17.88px;font-family:'Liberation Mono',monospace;color:#222;"><span style="color:#222">content-box;</span></div>
<div class="t m" style="left:734.5px;top:609.10px;font-size:13.75px;line-height:17.88px;font-family:'Liberation Mono',monospace;color:#222;"><span style="color:#5e5e5e">}</span></div>
<div class="a" style="left:729.8px;top:630.2px;width:364.5px;height:50px;background:#f8f8f8;"></div>
<div class="a" style="left:731px;top:630px;width:363px;height:1.2px;background:#dce4f2;"></div>
<div class="t m" style="left:734.5px;top:635.90px;font-size:13.75px;line-height:17.88px;font-family:'Liberation Mono',monospace;color:#222;font-style:italic"><span style="color:#a3285c">li</span><span style="color:#5e5e5e"> {</span></div>
<div class="t m" style="left:917px;top:635.90px;font-size:13.75px;line-height:17.88px;font-family:'Liberation Mono',monospace;color:#6e6e6e;font-style:italic">user agent stylesheet</div>
<div class="t m" style="left:757.5px;top:655.50px;font-size:13.75px;line-height:17.88px;font-family:'Liberation Mono',monospace;color:#222;font-style:italic;text-decoration:line-through;text-decoration-color:#333"><span style="color:#2a3878">display</span><span style="color:#5e5e5e">: </span><span style="color:#555">list-item;</span></div>
<div class="a" style="left:729.8px;top:670px;width:364.5px;height:10px;overflow:hidden"><div class="t" style="left:27.7px;top:3.6px;font-size:13.75px;line-height:17.9px;font-family:'Liberation Mono',monospace;font-style:italic;color:#2a3878">text-align: -webkit-match-parent;</div></div>
<div class="a" style="left:1111px;top:150px;width:423px;height:530px;background:#fff;"></div>
<div class="a" style="left:1114px;top:152.7px;width:417px;height:35.5px;background:#f3f3f3;"></div>
<div class="a" style="left:1122.7px;top:156px;width:79.3px;height:28.2px;background:#fbfbfb;"></div>
<div class="t" style="left:1135.5px;top:160.25px;font-size:14px;line-height:18.2px;font-family:'Liberation Sans',sans-serif;color:#3a66b8;">Console</div>
<svg class="a" style="left:1213px;top:159px" width="18" height="18" viewBox="0 0 18 18"><path d="M9 0.5V17.5M0.5 9H17.5" stroke="#333" stroke-width="1.4"/></svg>
<svg class="a" style="left:1453px;top:158px" width="18" height="22" viewBox="0 0 18 22"><path d="M8.5 19.5V8.5a2 2 0 0 1 2-2h3.5a2 2 0 0 1 2 2V18.5a2 2 0 0 1-2 2H10.5" fill="none" stroke="#333" stroke-width="1.5"/><path d="M8.5 11.5H5a2 2 0 0 0-2 2V18.5a2 2 0 0 0 2 2H8.5" fill="none" stroke="#333" stroke-width="1.5" stroke-dasharray="2 1.6"/><path d="M3.5 7.5A4.5 4.5 0 0 1 10.5 3.5M8 1L10.8 3.6L8.2 5.8" fill="none" stroke="#333" stroke-width="1.4"/></svg>
<svg class="a" style="left:1494px;top:161px" width="22" height="16" viewBox="0 0 22 16"><rect x="0.8" y="0.8" width="20.4" height="14.4" rx="2" fill="none" stroke="#333" stroke-width="1.5"/><path d="M15 1V15" stroke="#333" stroke-width="1.5"/><path d="M4 8H11M8.5 5L11.5 8L8.5 11" fill="none" stroke="#333" stroke-width="1.5"/></svg>
<div class="a" style="left:1114px;top:188px;width:417px;height:1px;background:#e3e3e3;"></div>
<div class="a" style="left:1114px;top:189px;width:417px;height:38px;background:#f3f3f3;"></div>
<div class="a" style="left:1114px;top:227px;width:417px;height:1.2px;background:#dde5f1;"></div>
<svg class="a" style="left:1126px;top:199px" width="22" height="17" viewBox="0 0 22 17"><rect x="0.8" y="0.8" width="20" height="15" rx="2" fill="none" stroke="#444" stroke-width="1.5"/><path d="M0.8 2.8a2 2 0 0 1 2-2H7V15.8H2.8a2 2 0 0 1-2-2Z" fill="#444"/><path d="M9.5 8.3H16.5M13.5 5.3L16.5 8.3L13.5 11.3" fill="none" stroke="#333" stroke-width="1.4"/></svg>
<svg class="a" style="left:1166px;top:196.5px" width="22" height="22" viewBox="0 0 22 22"><circle cx="11" cy="11" r="9.6" fill="none" stroke="#444" stroke-width="1.5"/><path d="M4.2 17.8L17.8 4.2" stroke="#444" stroke-width="1.5"/></svg>
<div class="a" style="left:1197.6px;top:192.2px;width:56px;height:29.5px;background:#e3e3e3;border-radius:3px"></div>
<div class="t" style="left:1204px;top:199.45px;font-size:15px;line-height:19.5px;font-family:'Liberation Sans',sans-serif;color:#333;">top</div>
<svg class="a" style="left:1237.5px;top:202px" width="11" height="9" viewBox="0 0 11 9"><path d="M0.5 0.5H10.5L5.5 8.5Z" fill="#333"/></svg>
<svg class="a" style="left:1266px;top:200px" width="22" height="15" viewBox="0 0 22 15"><path d="M1 10.5A11 11 0 0 1 21 10.5" fill="none" stroke="#444" stroke-width="1.5" stroke-linecap="round"/><circle cx="11" cy="10" r="3.3" fill="none" stroke="#444" stroke-width="1.5"/></svg>
<div class="a" style="left:1301.2px;top:192.8px;width:150.6px;height:29.2px;background:#fff;border:1px solid #b8b8b8;border-radius:4px"></div>
<div class="t" style="left:1306.5px;top:200.85px;font-size:14px;line-height:18.2px;font-family:'Liberation Sans',sans-serif;color:#6b6b6b;">Filter</div>
<div class="t" style="left:1465.5px;top:200.45px;font-size:14px;line-height:18.2px;font-family:'Liberation Sans',sans-serif;color:#333;">De</div>
<svg class="a" style="left:1494px;top:196px" width="23" height="23" viewBox="0 0 23 23"><path d="M11.5 1.3l2 .3.6 2.4 1.7.9 2.3-1 1.5 1.5-1 2.3.9 1.7 2.4.6.3 2-.3 2-2.4.6-.9 1.7 1 2.3-1.5 1.5-2.3-1-1.7.9-.6 2.4-2 .3-2-.3-.6-2.4-1.7-.9-2.3 1-1.5-1.5 1-2.3-.9-1.7-2.4-.6-.3-2 .3-2 2.4-.6.9-1.7-1-2.3 1.5-1.5 2.3 1 1.7-.9.6-2.4Z" fill="none" stroke="#444" stroke-width="1.4" stroke-linejoin="round"/><circle cx="11.5" cy="11.5" r="3.3" fill="none" stroke="#444" stroke-width="1.4"/></svg>
<div class="t m" style="left:1149.2px;top:238.90px;font-size:13.75px;line-height:17.88px;font-family:'Liberation Mono',monospace;color:#242424;">Marking task sguxeg8vc as</div>
<div class="t m" style="left:1149.2px;top:256.60px;font-size:13.75px;line-height:17.88px;font-family:'Liberation Mono',monospace;color:#242424;">active</div>
<div class="t m" style="left:1389.5px;top:239.10px;font-size:13.75px;line-height:17.88px;font-family:'Liberation Mono',monospace;color:#1f3f7f;text-decoration:underline;text-underline-offset:1.5px">to-do.js:125</div>
<div class="a" style="left:1149.7px;top:277.6px;width:344px;height:1.2px;background:#dde5f2;"></div>
<div class="t m" style="left:1149.2px;top:285.10px;font-size:13.75px;line-height:17.88px;font-family:'Liberation Mono',monospace;color:#242424;">Marking task sguxeg8vc as</div>
<div class="t m" style="left:1149.2px;top:302.90px;font-size:13.75px;line-height:17.88px;font-family:'Liberation Mono',monospace;color:#242424;">done</div>
<div class="t m" style="left:1389.5px;top:285.10px;font-size:13.75px;line-height:17.88px;font-family:'Liberation Mono',monospace;color:#1f3f7f;text-decoration:underline;text-underline-offset:1.5px">to-do.js:125</div>
<div class="a" style="left:1149.7px;top:323.5px;width:344px;height:1.2px;background:#dde5f2;"></div>
<svg class="a" style="left:1134.5px;top:332.5px" width="9" height="12" viewBox="0 0 9 12"><path d="M1.5 1L7.2 6L1.5 11" fill="none" stroke="#333" stroke-width="1.5"/></svg>
<div class="t m" style="left:1149.2px;top:331.70px;font-size:13.75px;line-height:17.88px;font-family:'Liberation Mono',monospace;color:#222;"><span style="color:#242424">$$(&quot;</span><span style="color:#a3285c">.task</span><span style="color:#242424">&quot;)</span></div>
<div class="a" style="left:1149.7px;top:349.9px;width:344px;height:1.2px;background:#dde5f2;"></div>
<svg class="a" style="left:1133px;top:361.5px" width="10" height="10" viewBox="0 0 10 10"><path d="M4.5 1L1 4.5L4.5 8" fill="none" stroke="#333" stroke-width="1.4"/><circle cx="7.8" cy="4.6" r="1" fill="#333"/></svg>
<svg class="a" style="left:1153px;top:374.3px" width="10" height="8" viewBox="0 0 10 8"><path d="M0.5 0.5L9.5 0.5L5 7.5Z" fill="#333" stroke="#333" stroke-width="1" stroke-linejoin="round"/></svg>
<div class="t m" style="left:1170.5px;top:358.90px;font-size:13.75px;line-height:17.88px;font-family:'Liberation Mono',monospace;color:#222;font-style:italic"><span style="color:#6e6e6e">(3) [</span><span style="color:#8e2356">li</span><span style="color:#a05a28">.task</span><span style="color:#6e6e6e">, </span><span style="color:#8e2356">li</span><span style="color:#a05a28">.task</span><span style="color:#6e6e6e">,</span></div>
<div class="t m" style="left:1170.5px;top:377.30px;font-size:13.75px;line-height:17.88px;font-family:'Liberation Mono',monospace;color:#222;font-style:italic"><span style="color:#8e2356">li</span><span style="color:#a05a28">.task.completed</span><span style="color:#6e6e6e">]</span></div>
<div class="a" style="left:1327.8px;top:378.5px;width:13px;height:12.3px;background:#d6e4f7;border-radius:2px"></div>
<div class="t m" style="left:1331.3px;top:379.22px;font-size:11px;line-height:14.3px;font-family:'Liberation Mono',monospace;color:#2a5f9e;font-style:italic">i</div>
<svg class="a" style="left:1172px;top:399.6px" width="8" height="10" viewBox="0 0 8 10"><path d="M0.5 0.5L7.5 5L0.5 9.5Z" fill="#333" stroke="#333" stroke-width="1" stroke-linejoin="round"/></svg>
<div class="t m" style="left:1187.5px;top:396.70px;font-size:13.75px;line-height:17.88px;font-family:'Liberation Mono',monospace;color:#222;"><span style="color:#8a1a8a;font-weight:bold">0</span><span style="color:#242424">: </span><span style="color:#8e2356">li</span><span style="color:#a05a28">.task</span></div>
<svg class="a" style="left:1172px;top:419.8px" width="8" height="10" viewBox="0 0 8 10"><path d="M0.5 0.5L7.5 5L0.5 9.5Z" fill="#333" stroke="#333" stroke-width="1" stroke-linejoin="round"/></svg>
<div class="t m" style="left:1187.5px;top:416.90px;font-size:13.75px;line-height:17.88px;font-family:'Liberation Mono',monospace;color:#222;"><span style="color:#8a1a8a;font-weight:bold">1</span><span style="color:#242424">: </span><span style="color:#8e2356">li</span><span style="color:#a05a28">.task</span></div>
<svg class="a" style="left:1172px;top:440.0px" width="8" height="10" viewBox="0 0 8 10"><path d="M0.5 0.5L7.5 5L0.5 9.5Z" fill="#333" stroke="#333" stroke-width="1" stroke-linejoin="round"/></svg>
<div class="t m" style="left:1187.5px;top:437.10px;font-size:13.75px;line-height:17.88px;font-family:'Liberation Mono',monospace;color:#222;"><span style="color:#8a1a8a;font-weight:bold">2</span><span style="color:#242424">: </span><span style="color:#8e2356">li</span><span style="color:#a05a28">.task.completed</span></div>
<div class="t m" style="left:1187.5px;top:457.40px;font-size:13.75px;line-height:17.88px;font-family:'Liberation Mono',monospace;color:#222;"><span style="color:#666;font-weight:bold">length</span><span style="color:#242424">: </span><span style="color:#1a57a8">3</span></div>
<svg class="a" style="left:1172px;top:480.6px" width="8" height="10" viewBox="0 0 8 10"><path d="M0.5 0.5L7.5 5L0.5 9.5Z" fill="#333" stroke="#333" stroke-width="1" stroke-linejoin="round"/></svg>
<div class="t m" style="left:1187.5px;top:477.70px;font-size:13.75px;line-height:17.88px;font-family:'Liberation Mono',monospace;color:#222;"><span style="color:#7a3a8a">[[Prototype]]</span><span style="color:#242424">: </span><span style="color:#242424">Array(0)</span></div>
<svg class="a" style="left:1130.5px;top:508.5px" width="9" height="12" viewBox="0 0 9 12"><path d="M1.5 1L7.2 6L1.5 11" fill="none" stroke="#3a7bd5" stroke-width="1.5"/></svg>
<div class="a" style="left:1111.4px;top:149.6px;width:422.6px;height:534.4px;background:transparent;border:3px solid #dc1a22"></div></div></div>
</body></html>
